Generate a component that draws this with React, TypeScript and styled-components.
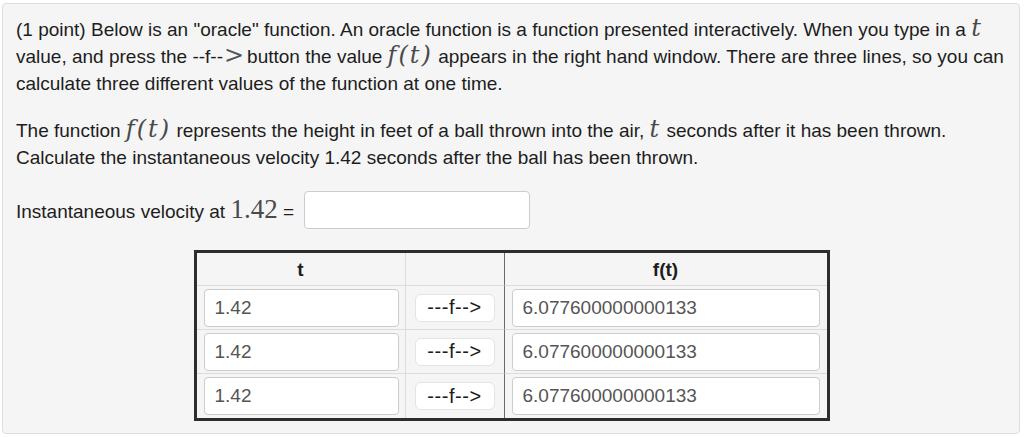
import styled, { createGlobalStyle } from "styled-components";

const GlobalStyle = createGlobalStyle`
  body {
    margin: 0;
    background: #ffffff;
    font-family: "Liberation Sans", Arial, sans-serif;
    color: #1d1d1d;
  }
`;

const Panel = styled.div`
  box-sizing: border-box;
  width: 1018px;
  height: 431px;
  margin: 3px 0 0 2px;
  padding: 12px 12px 0 13px;
  background: #f5f5f5;
  border: 1px solid #dedede;
  border-radius: 4px;
  font-size: 19px;
  line-height: 27px;
`;

const Para = styled.p`
  margin: 0 0 20px 0;
`;

const Math = styled.span`
  font-family: "DejaVu Serif", "Liberation Serif", serif;
  font-style: italic;
  font-size: 24px;
  line-height: 1;
  letter-spacing: 2px;
  color: #4a4a4a;
`;

const Gt = styled.span`
  font-family: "DejaVu Serif", "Liberation Serif", serif;
  font-size: 24px;
  line-height: 1;
  color: #555555;
  margin: 0 3px 0 1px;
`;

const MathNum = styled.span`
  font-family: "Liberation Serif", serif;
  font-size: 27px;
  line-height: 1;
  color: #4a4a4a;
`;

const AnswerRow = styled.div`
  display: flex;
  align-items: center;
  gap: 10px;
  margin-top: 4px;
`;

const TextBox = styled.input<{ $w: number }>`
  box-sizing: border-box;
  width: ${(p) => p.$w}px;
  height: 38px;
  border: 1px solid #cccccc;
  border-radius: 4px;
  background: #ffffff;
  padding: 0 10px;
  font-family: "Liberation Sans", Arial, sans-serif;
  font-size: 19px;
  color: #555555;
  outline: none;
`;

const Table = styled.div`
  width: 630px;
  margin: 21px auto 0;
  border: 3px solid #2d2d2d;
  display: grid;
  grid-template-columns: 209px 99px 322px;
`;

const Cell = styled.div<{ $head?: boolean; $last?: boolean; $col: number }>`
  box-sizing: border-box;
  height: ${(p) => (p.$head ? 33 : 44)}px;
  display: flex;
  align-items: center;
  justify-content: ${(p) => (p.$head || p.$col === 1 ? "center" : "flex-start")};
  padding: 0 7px;
  font-size: 19px;
  font-weight: ${(p) => (p.$head ? 700 : 400)};
  border-bottom: ${(p) => (p.$last ? "none" : "1px solid #dcdcdc")};
  border-right: ${(p) =>
    p.$col === 0 ? "1px solid #dcdcdc" : p.$col === 1 ? "1px solid #6a6a6a" : "none"};
`;

const FButton = styled.button`
  width: 80px;
  height: 28px;
  border: 1px solid #e4e4e4;
  border-radius: 6px;
  background: #ffffff;
  font-family: "Liberation Sans", Arial, sans-serif;
  font-size: 20px;
  letter-spacing: 0.6px;
  color: #1d1d1d;
  padding: 0;
`;

const rows = ["1.42", "1.42", "1.42"];

function App() {
  return (
    <>
      <GlobalStyle />
      <Panel>
        <Para>
          (1 point) Below is an "oracle" function. An oracle function is a function presented
          interactively. When you type in a <Math>t</Math>
          <br />
          value, and press the --f--<Gt>{">"}</Gt>button the value <Math>f(t)</Math> appears in
          the right hand window. There are three lines, so you can
          <br />
          calculate three different values of the function at one time.
        </Para>
        <Para>
          The function <Math>f(t)</Math> represents the height in feet of a ball thrown into the
          air, <Math>t</Math> seconds after it has been thrown.
          <br />
          Calculate the instantaneous velocity 1.42 seconds after the ball has been thrown.
        </Para>
        <AnswerRow>
          <span>
            Instantaneous velocity at <MathNum>1.42</MathNum> =
          </span>
          <TextBox $w={226} defaultValue="" />
        </AnswerRow>
        <Table>
          <Cell $head $col={0}>t</Cell>
          <Cell $head $col={1}></Cell>
          <Cell $head $col={2}>f(t)</Cell>
          {rows.map((v, i) => {
            const last = i === rows.length - 1;
            return [
              <Cell key={`a${i}`} $col={0} $last={last}>
                <TextBox $w={195} defaultValue={v} />
              </Cell>,
              <Cell key={`b${i}`} $col={1} $last={last}>
                <FButton>---f--&gt;</FButton>
              </Cell>,
              <Cell key={`c${i}`} $col={2} $last={last}>
                <TextBox $w={308} defaultValue="6.077600000000133" />
              </Cell>,
            ];
          })}
        </Table>
      </Panel>
    </>
  );
}

export default App;
